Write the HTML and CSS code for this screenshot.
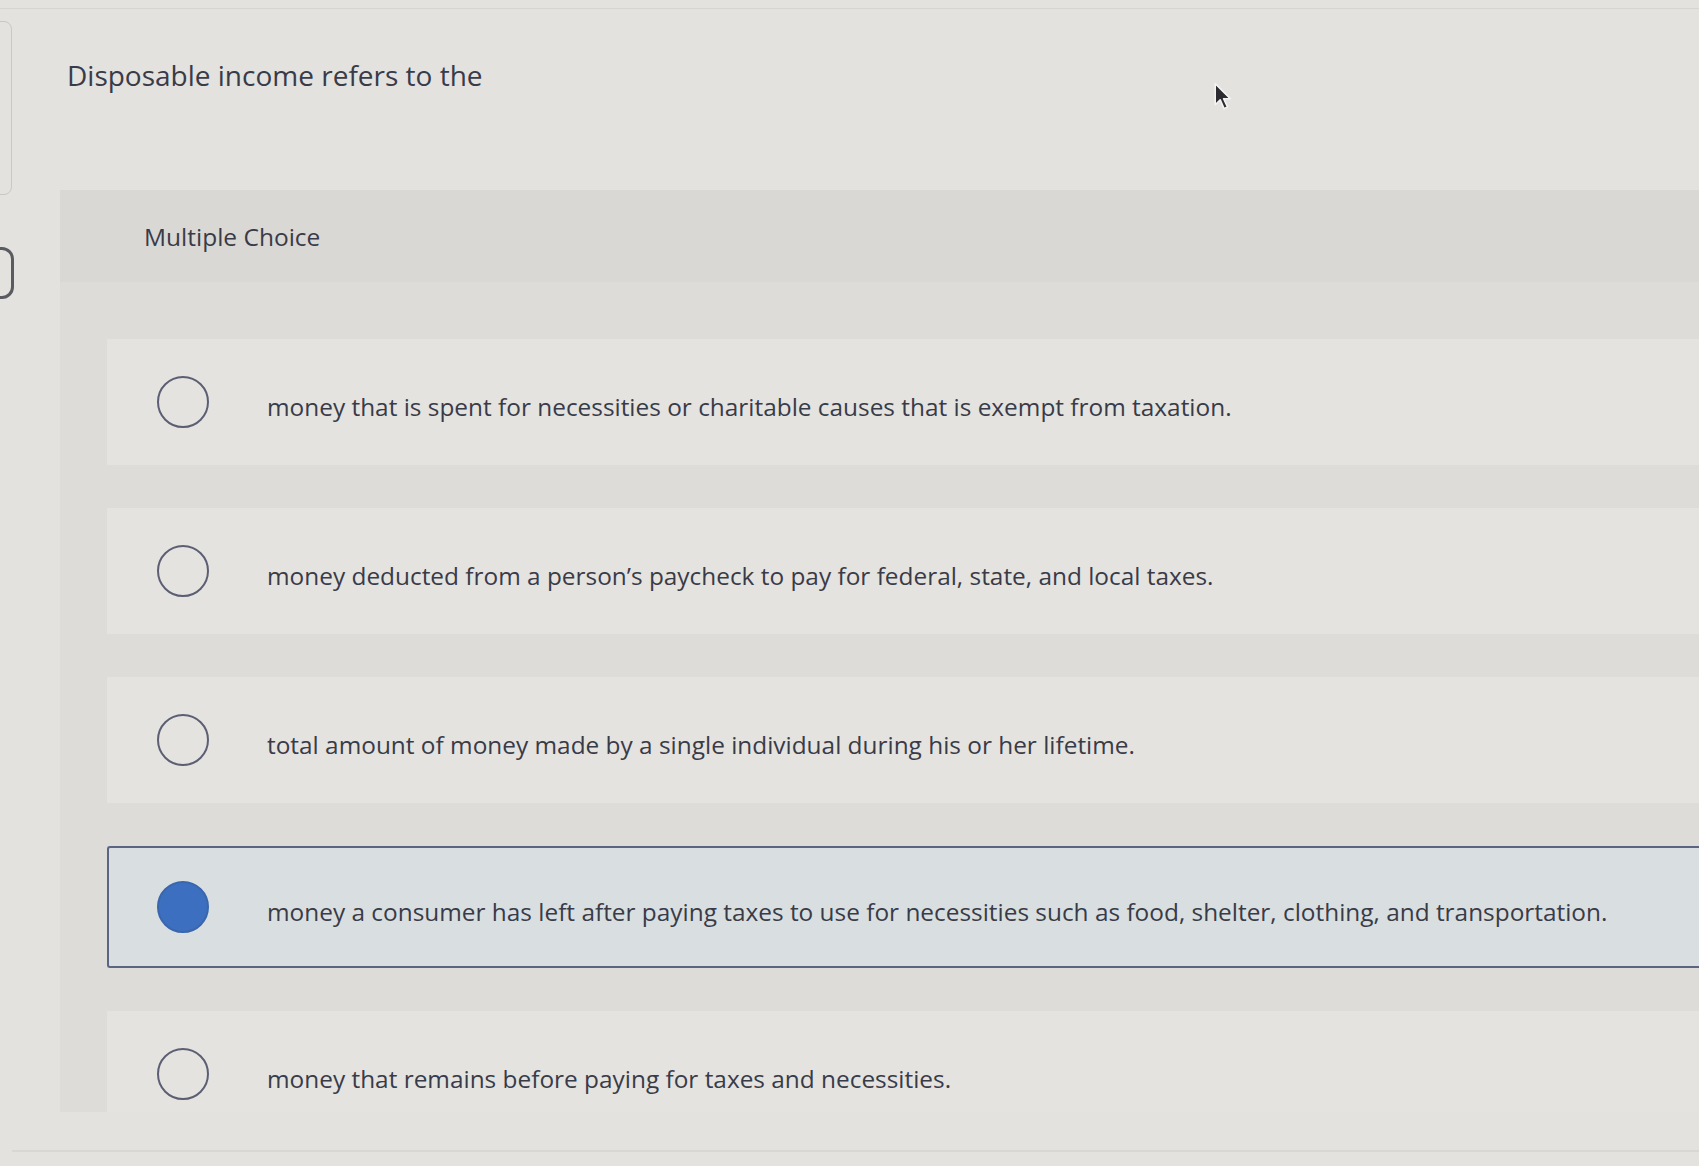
FILE: index.html
```html
<!DOCTYPE html>
<html lang="en">
<head>
    <meta charset="UTF-8">
    <meta name="viewport" content="width=device-width, initial-scale=1.0">
    <title>Disposable Income - Multiple Choice</title>
    <link rel="stylesheet" href="styles.css">
</head>
<body>
    <div class="layout">
        <div class="rail">
            <div class="rail-tab"></div>
            <div class="rail-knob"></div>
        </div>
        <div class="main">
            <p class="question">Disposable income refers to the</p>

            <div class="choice-panel">
                <div class="choice-header">Multiple Choice</div>
                <div class="choice-list">
                    <label class="choice">
                        <span class="radio"></span>
                        <span class="choice-text">money that is spent for necessities or charitable causes that is exempt from taxation.</span>
                    </label>
                    <label class="choice">
                        <span class="radio"></span>
                        <span class="choice-text">money deducted from a person’s paycheck to pay for federal, state, and local taxes.</span>
                    </label>
                    <label class="choice">
                        <span class="radio"></span>
                        <span class="choice-text">total amount of money made by a single individual during his or her lifetime.</span>
                    </label>
                    <label class="choice selected">
                        <span class="radio"></span>
                        <span class="choice-text">money a consumer has left after paying taxes to use for necessities such as food, shelter, clothing, and transportation.</span>
                    </label>
                    <label class="choice">
                        <span class="radio"></span>
                        <span class="choice-text">money that remains before paying for taxes and necessities.</span>
                    </label>
                </div>
            </div>
            <div class="page-foot"></div>
        </div>
    </div>

    <!-- mouse pointer -->
    <svg class="pointer" width="20" height="30" viewBox="0 0 18 26">
        <path d="M2 1 L2 20 L6.5 15.5 L10 23.5 L13 22 L9.5 14.5 L15.5 14.5 Z" fill="#2b2b30" stroke="#f4f4f4" stroke-width="1.4" stroke-linejoin="round"/>
    </svg>
</body>
</html>
```

FILE: styles.css
```css
body {
    margin: 0;
    background-color: #e3e2df;
    font-family: "Open Sans", Lato, Arial, sans-serif;
    color: #393b48;
    overflow: hidden;
}
.layout {
    display: flex;
    min-height: 100vh;
    border-top: 1px solid #d6d5d2;
    margin-top: 8px;
}
.rail {
    width: 12px;
    flex-shrink: 0;
    display: flex;
    flex-direction: column;
}
.rail-tab {
    height: 172px;
    margin-top: 12px;
    margin-left: -20px;
    border: 1px solid #c9c8c5;
    border-radius: 0 8px 8px 0;
}
.rail-knob {
    height: 46px;
    margin-top: 52px;
    margin-left: -20px;
    width: 28px;
    border: 3px solid #5a5b60;
    border-radius: 0 12px 12px 0;
}
.main {
    flex: 1;
    min-width: 0;
}
.question {
    margin: 48px 0 0 55px;
    font-size: 28px;
    line-height: 36px;
}
.choice-panel {
    margin: 97px 0 0 48px;
    height: 922px;
    overflow: hidden;
    background-color: #dddcd9;
}
.choice-header {
    height: 92px;
    display: flex;
    align-items: center;
    padding-left: 84px;
    font-size: 24.5px;
    background-color: #d9d8d5;
}
.choice-list {
    display: flex;
    flex-direction: column;
    gap: 43px;
    padding: 57px 0 0 47px;
}
.choice {
    display: flex;
    align-items: center;
    height: 126px;
    padding-left: 50px;
    background-color: #e4e3e0;
    box-sizing: border-box;
}
.radio {
    width: 52px;
    height: 52px;
    border: 2px solid #5c5f74;
    border-radius: 50%;
    box-sizing: border-box;
    flex-shrink: 0;
}
.choice-text {
    margin: 8px 0 0 58px;
    font-size: 24.4px;
    white-space: nowrap;
}
.choice.selected {
    background-color: #d9dfe0;
    border: 2px solid #5b6582;
    border-right: none;
    border-radius: 3px 0 0 3px;
    height: 122px;
    padding-left: 48px;
}
.choice.selected .radio {
    background-color: #3d6fc0;
    border-color: #3a66ad;
}
.page-foot {
    margin-top: 38px;
    border-top: 2px solid #d8d7d3;
}
.pointer {
    position: absolute;
    left: 1213px;
    top: 82px;
}
```
